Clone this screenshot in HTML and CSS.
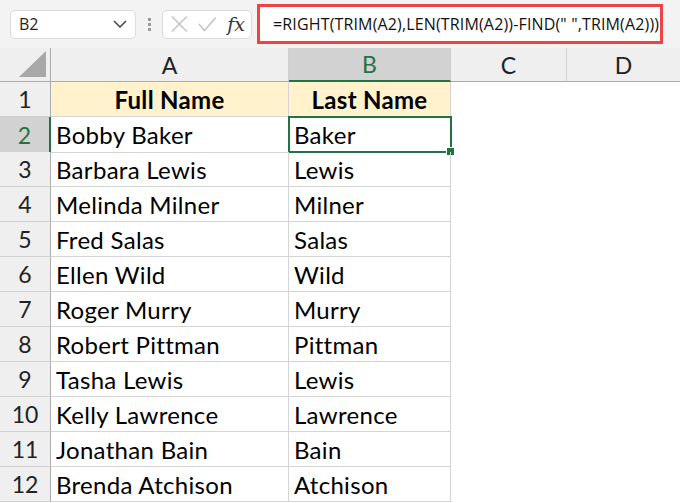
FILE: index.html
```html
<!DOCTYPE html>
<html lang="en">
<head>
    <meta charset="UTF-8">
    <title>Extract last name</title>
    <link rel="stylesheet" href="styles.css">
</head>
<body>
    <div class="toolbar">
        <div class="namebox">
            <span>B2</span>
            <svg width="14" height="8" viewBox="0 0 14 8"><path d="M1 1 L7 7 L13 1" fill="none" stroke="#444" stroke-width="1.5"/></svg>
        </div>
        <div class="dots"><i></i><i></i><i></i></div>
        <div class="fxbox">
            <svg width="20" height="20" viewBox="0 0 20 20"><path d="M2 2 L18 18 M18 2 L2 18" stroke="#c4c4c4" stroke-width="1.6"/></svg>
            <svg width="22" height="20" viewBox="0 0 22 20"><path d="M2 10 L8 17 L20 3" fill="none" stroke="#c4c4c4" stroke-width="1.6"/></svg>
            <span class="fx">fx</span>
        </div>
        <div class="formula">=RIGHT(TRIM(A2),LEN(TRIM(A2))-FIND(" ",TRIM(A2)))</div>
    </div>
    <div class="sheet">
        <div class="corner"><div class="tri"></div></div>
        <div class="colhead">A</div>
        <div class="colhead active">B</div>
        <div class="colhead">C</div>
        <div class="colhead last">D</div>
    </div>
    <div class="rows" id="rows"></div>
    <script>
        var names = ['Bobby Baker', 'Barbara Lewis', 'Melinda Milner', 'Fred Salas', 'Ellen Wild',
            'Roger Murry', 'Robert Pittman', 'Tasha Lewis', 'Kelly Lawrence', 'Jonathan Bain', 'Brenda Atchison'];
        var html = '<div class="row"><div class="rowhead">1</div>' +
            '<div class="cell head">Full Name</div><div class="cell head">Last Name</div><div class="blank"></div></div>';
        for (var i = 0; i < names.length; i++) {
            var last = names[i].split(' ').pop();
            var sel = i === 0 ? ' active' : '';
            html += '<div class="row"><div class="rowhead' + sel + '">' + (i + 2) + '</div>' +
                '<div class="cell">' + names[i] + '</div>' +
                '<div class="cell' + (i === 0 ? ' selected' : '') + '">' + last +
                (i === 0 ? '<span class="handle"></span>' : '') + '</div><div class="blank"></div></div>';
        }
        document.getElementById('rows').innerHTML = html;
    </script>
</body>
</html>
```

FILE: styles.css
```css
body {
    margin: 0;
    width: 680px;
    height: 503px;
    overflow: hidden;
    background: #fff;
    font-family: Lato, "Open Sans", sans-serif;
}
.toolbar {
    height: 48px;
    background: #f3f3f3;
    display: flex;
    align-items: center;
    box-sizing: border-box;
    padding-left: 10px;
}
.namebox {
    width: 126px;
    height: 29px;
    box-sizing: border-box;
    background: #fff;
    border: 1px solid #dadada;
    border-radius: 5px;
    display: flex;
    align-items: center;
    justify-content: space-between;
    padding: 0 8px 0 8px;
    font-family: "Open Sans", sans-serif;
    font-size: 16px;
    color: #222;
}
.dots {
    width: 26px;
    display: flex;
    flex-direction: column;
    align-items: center;
    gap: 2px;
}
.dots i {
    width: 3px;
    height: 3px;
    background: #9a9a9a;
}
.fxbox {
    width: 90px;
    height: 29px;
    box-sizing: border-box;
    background: #fff;
    border: 1px solid #dadada;
    border-radius: 5px;
    display: flex;
    align-items: center;
    padding: 0 6px 0 7px;
    gap: 8px;
}
.fx {
    font-family: "DejaVu Serif", serif;
    font-style: italic;
    font-size: 19px;
    color: #333;
    margin-left: 2px;
}
.formula {
    margin-left: 5px;
    width: 406px;
    height: 40px;
    box-sizing: border-box;
    border: 3px solid #ef4444;
    background: #fff;
    display: flex;
    align-items: center;
    padding-left: 13px;
    font-family: "Open Sans", sans-serif;
    font-size: 16px;
    letter-spacing: 0.15px;
    color: #111;
    white-space: pre;
}
.sheet {
    display: grid;
    grid-template-columns: 51px 238px 162px 116px 113px;
    height: 34px;
    background: #efefef;
}
.corner, .colhead {
    border-right: 1px solid #d0d0d0;
    border-bottom: 1px solid #ababab;
    box-sizing: border-box;
}
.corner {
    border-right-color: #ababab;
    position: relative;
}
.tri {
    position: absolute;
    right: 4px;
    bottom: 4px;
    width: 27px;
    height: 26px;
    background: #a8a8a8;
    clip-path: polygon(100% 0, 100% 100%, 0 100%);
}
.colhead {
    display: flex;
    align-items: center;
    justify-content: center;
    font-size: 23px;
    color: #222;
}
.colhead.last {
    border-right: none;
}
.colhead.active {
    background: #d2d2d2;
    color: #217346;
    border-bottom: 2px solid #217346;
}
.row {
    display: grid;
    grid-template-columns: 51px 238px 162px 1fr;
    height: 35px;
}
.rowhead {
    background: #efefef;
    border-right: 1px solid #ababab;
    border-bottom: 1px solid #d0d0d0;
    box-sizing: border-box;
    display: flex;
    align-items: center;
    justify-content: center;
    font-size: 23px;
    color: #222;
}
.rowhead.active {
    background: #d2d2d2;
    color: #217346;
    border-right: 2px solid #217346;
}
.cell {
    border-right: 1px solid #d4d4d4;
    border-bottom: 1px solid #d4d4d4;
    box-sizing: border-box;
    display: flex;
    align-items: center;
    padding-left: 5px;
    font-size: 24px;
    letter-spacing: 0.3px;
    color: #000;
    position: relative;
}
.cell.head {
    background: #fff2cc;
    justify-content: center;
    padding-left: 0;
    font-weight: bold;
}
.cell.selected {
    border: 2px solid #217346;
    margin: -1px 0 0 -1px;
    height: 37px;
    width: 164px;
    padding-left: 4px;
}
.handle {
    position: absolute;
    right: -5px;
    bottom: -5px;
    width: 7px;
    height: 7px;
    background: #217346;
    border: 1px solid #fff;
}
.blank {
    background: #fff;
}
```
